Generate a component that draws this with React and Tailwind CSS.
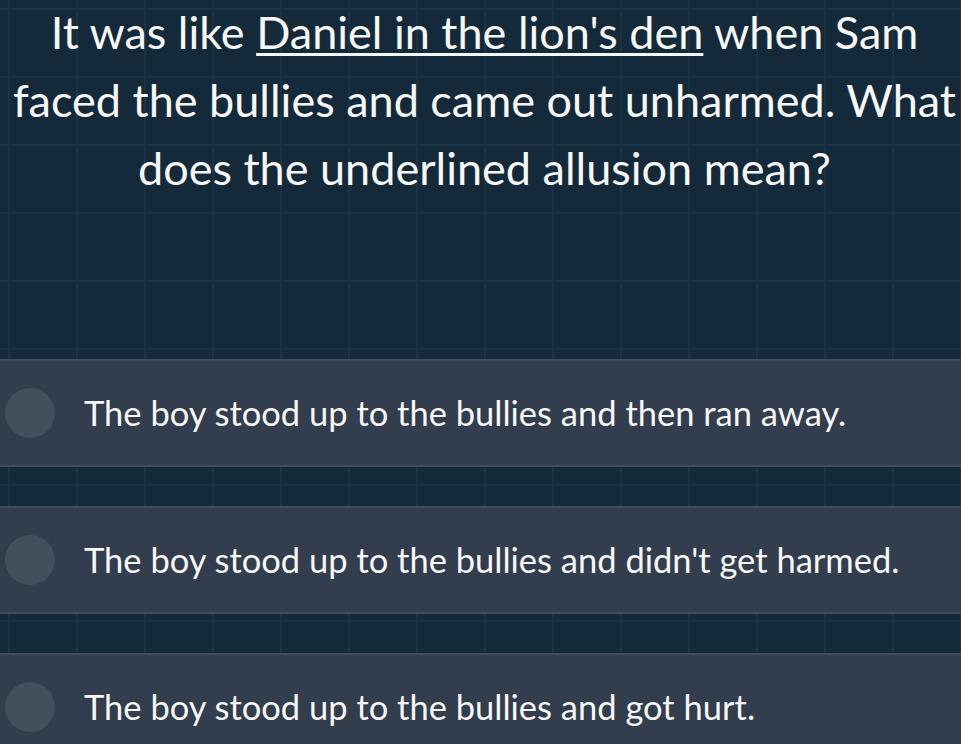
export default function App() {
  const options = [
    'The boy stood up to the bullies and then ran away.',
    "The boy stood up to the bullies and didn't get harmed.",
    'The boy stood up to the bullies and got hurt.',
  ]

  return (
    <div
      className="w-[961px] h-[744px] overflow-hidden bg-[#142a3a] bg-[linear-gradient(to_right,#1a3345_2px,transparent_2px),linear-gradient(to_bottom,#1a3345_2px,transparent_2px)] bg-[size:68px_68px] bg-[position:8px_8px] text-[#f7f7f7]"
      style={{ fontFamily: 'Lato, "Open Sans", sans-serif' }}
    >
      {/* Question */}
      <div className="pl-[8px] text-center text-[45px] leading-[68px] whitespace-nowrap">
        <p className="-mt-[2px]">
          It was like <span className="underline decoration-[3px] underline-offset-[4px]">Daniel in the lion's den</span> when Sam
          <br />
          faced the bullies and came out unharmed. What
          <br />
          does the underlined allusion mean?
        </p>
      </div>

      {/* Options */}
      <div className="mt-[157px] flex flex-col gap-[39px]">
        {options.map((text) => (
          <div
            key={text}
            className="h-[108px] shrink-0 flex items-center bg-[#323d4e] border-y-2 border-[#414d5d]"
          >
            <div className="ml-[5px] w-[50px] h-[50px] rounded-full bg-[#444f5e] shrink-0"></div>
            <span className="ml-[29px] text-[34.5px] whitespace-nowrap">{text}</span>
          </div>
        ))}
      </div>
    </div>
  )
}
